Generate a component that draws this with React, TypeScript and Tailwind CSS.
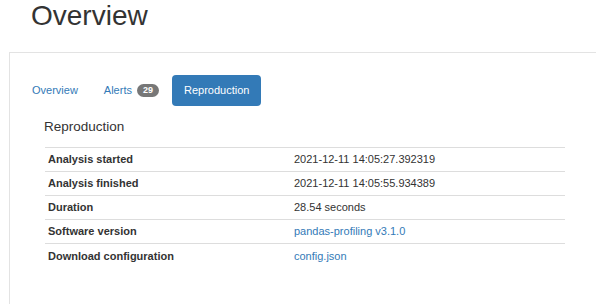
import React from "react";

type Row = {
  label: string;
  value: string;
  link?: boolean;
};

export default function App() {
  const rows: Row[] = [
    { label: "Analysis started", value: "2021-12-11 14:05:27.392319" },
    { label: "Analysis finished", value: "2021-12-11 14:05:55.934389" },
    { label: "Duration", value: "28.54 seconds" },
    { label: "Software version", value: "pandas-profiling v3.1.0", link: true },
    { label: "Download configuration", value: "config.json", link: true },
  ];

  return (
    <div className="w-[596px] h-[304px] overflow-hidden bg-white font-['Liberation_Sans',Arial,sans-serif] text-[#333]">
      {/* Page title */}
      <h1 className="pl-[31px] text-[28px] leading-[31px] font-normal">Overview</h1>

      {/* Panel */}
      <div className="mt-[21px] ml-[9px] h-[260px] border-l border-t border-[#e3e3e3] pl-[10px] pt-[22px]">
        {/* Tabs */}
        <div className="flex items-center text-[11px] leading-[13px]">
          <a className="flex items-center h-[31px] px-[12px] text-[#337ab7]">Overview</a>
          <a className="ml-[2px] flex items-center h-[31px] px-[12px] text-[#337ab7]">
            Alerts
            <span className="ml-[5px] flex items-center justify-center w-[22px] h-[13px] rounded-full bg-[#777] text-white text-[9px] font-bold">
              29
            </span>
          </a>
          <a className="ml-[1px] flex items-center h-[31px] px-[12px] rounded-[4px] bg-[#337ab7] text-white">
            Reproduction
          </a>
        </div>

        {/* Tab content */}
        <div className="pl-[24px] pt-[12px]">
          <h2 className="text-[13.5px] leading-[17px] font-normal">Reproduction</h2>
          <table className="mt-[12px] ml-[1px] w-[520px] border-collapse text-[11px]">
            <tbody>
              {rows.map((row, i) => (
                <tr key={i} className={i === 0 ? "border-t border-b border-[#ddd]" : i === rows.length - 1 ? "" : "border-b border-[#ddd]"}>
                  <th className="w-[246px] h-[24px] pl-[3px] text-left font-bold align-middle">{row.label}</th>
                  <td className={"h-[24px] pl-[3px] align-middle " + (row.link ? "text-[#337ab7]" : "")}>{row.value}</td>
                </tr>
              ))}
            </tbody>
          </table>
        </div>
      </div>
    </div>
  );
}
